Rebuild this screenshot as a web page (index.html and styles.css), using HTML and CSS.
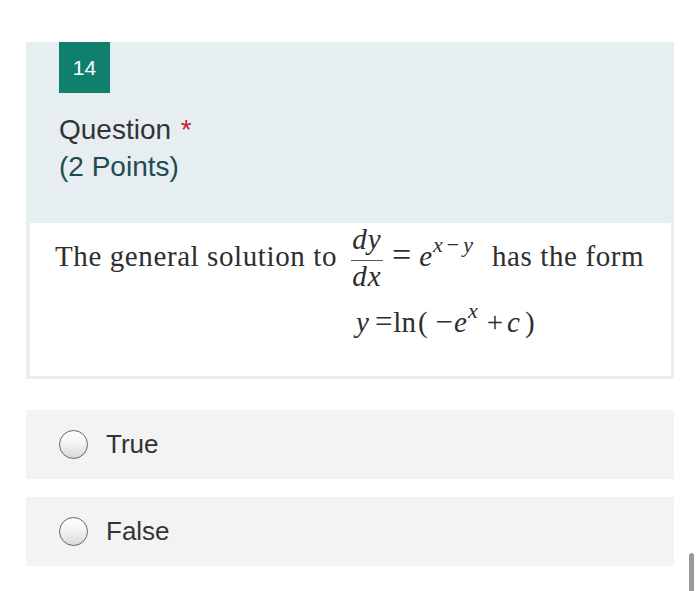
FILE: index.html
```html
<!DOCTYPE html>
<html>
<head>
<meta charset="utf-8">
<link rel="stylesheet" href="styles.css">
</head>
<body>
<div class="page">
  <section class="question">
    <div class="q-head">
      <div class="badge">14</div>
      <div class="q-title">Question <span class="req">*</span></div>
      <div class="q-points">(2 Points)</div>
    </div>
    <div class="q-image">
      <div class="eq-line1">
        <span class="txt">The general solution to</span><span class="frac"><span class="num"><i>dy</i></span><span class="bar"></span><span class="den"><i>dx</i></span></span><span class="txt rest"><span class="op eq1">=</span><i class="e1">e</i><span class="sup"><i>x</i><span class="minus">−</span><i>y</i></span><span class="hasform">has the form</span></span>
      </div>
      <div class="eq-line2"><i>y</i><span class="op eq2">=</span><span class="ln">ln</span><span class="lp">(</span><span class="neg">−</span><i class="e2">e</i><span class="sup"><i>x</i></span><span class="plus">+</span><i class="c">c</i><span class="rp">)</span></div>
    </div>
  </section>
  <div class="option"><span class="radio"></span><span class="opt-label">True</span></div>
  <div class="option"><span class="radio"></span><span class="opt-label">False</span></div>
</div>
<div class="scrollbar"></div>
</body>
</html>
```

FILE: styles.css
```css
html, body {
  margin: 0;
  padding: 0;
  background: #ffffff;
}

body {
  font-family: "Liberation Sans", Arial, sans-serif;
  width: 700px;
  height: 591px;
  overflow: hidden;
}

.page {
  padding: 42px 26px 0 26px;
  display: flex;
  flex-direction: column;
}

.question {
  background: #e7eef1;
  padding: 0 3px 3px 4px;
  display: flex;
  flex-direction: column;
}

.q-head {
  padding: 0 0 38px 29px;
  display: flex;
  flex-direction: column;
  align-items: flex-start;
}

.badge {
  width: 51px;
  height: 51px;
  background: #10806e;
  color: #ffffff;
  font-size: 21px;
  display: flex;
  align-items: center;
  justify-content: center;
}

.q-title {
  margin-top: 18px;
  font-size: 28px;
  line-height: 37px;
  color: #333333;
}

.req {
  color: #c4262e;
  margin-left: 2px;
}

.q-points {
  font-size: 28px;
  line-height: 37px;
  color: #1f4c50;
}

.q-image {
  background: #ffffff;
  height: 153px;
  box-sizing: border-box;
  padding: 0 0 0 25px;
  color: #2e2e2e;
  font-family: "Liberation Serif", "Times New Roman", serif;
  font-size: 29px;
  white-space: nowrap;
}

.q-image i {
  font-style: italic;
}

.eq-line1 {
  display: flex;
  align-items: center;
  height: 65px;
}

.txt {
  line-height: 36px;
  letter-spacing: 0.6px;
}

.frac {
  display: flex;
  flex-direction: column;
  align-items: center;
  margin-left: 14px;
  width: 32px;
  margin-top: 4px;
}

.num {
  line-height: 28px;
  padding-bottom: 7px;
  letter-spacing: 1px;
}

.den {
  line-height: 28px;
  padding-top: 1px;
  letter-spacing: 1px;
}

.bar {
  display: block;
  width: 32px;
  height: 1px;
  background: #555555;
}

.rest {
  letter-spacing: 0;
}

.op {
  display: inline-block;
}

.eq1 {
  font-size: 34px;
  margin-left: 9px;
}

.e1 {
  margin-left: 8px;
}

.sup {
  font-size: 22px;
  line-height: 0;
  vertical-align: 0.65em;
  margin-left: 1px;
}

.minus {
  margin: 0 4px;
}

.hasform {
  margin-left: 19px;
  letter-spacing: 0.6px;
}

.eq-line2 {
  margin-top: 16px;
  margin-left: 301px;
  line-height: 36px;
}

.eq2 {
  font-size: 31px;
  margin-left: 6px;
}

.ln {
  margin-left: 1px;
}

.lp {
  margin-left: 2px;
}

.neg {
  font-size: 31px;
  margin-left: 8px;
}

.e2 {
  margin-left: 1px;
}

.plus {
  margin-left: 9px;
}

.c {
  margin-left: 4px;
}

.rp {
  margin-left: 5px;
}

.option {
  background: #f3f3f3;
  height: 69px;
  display: flex;
  align-items: center;
  padding-left: 33px;
  margin-top: 18px;
}

.question + .option {
  margin-top: 31px;
}

.radio {
  width: 27px;
  height: 27px;
  border: 1.5px solid #666666;
  border-radius: 50%;
  background: linear-gradient(#ffffff 0%, #f4f4f4 45%, #d8d8d8 100%);
  flex: none;
}

.opt-label {
  margin-left: 18px;
  font-size: 26px;
  color: #333333;
}

.scrollbar {
  position: absolute;
  left: 689px;
  top: 553px;
  width: 5px;
  height: 50px;
  border-radius: 3px;
  background: #9a9a9a;
}
```
